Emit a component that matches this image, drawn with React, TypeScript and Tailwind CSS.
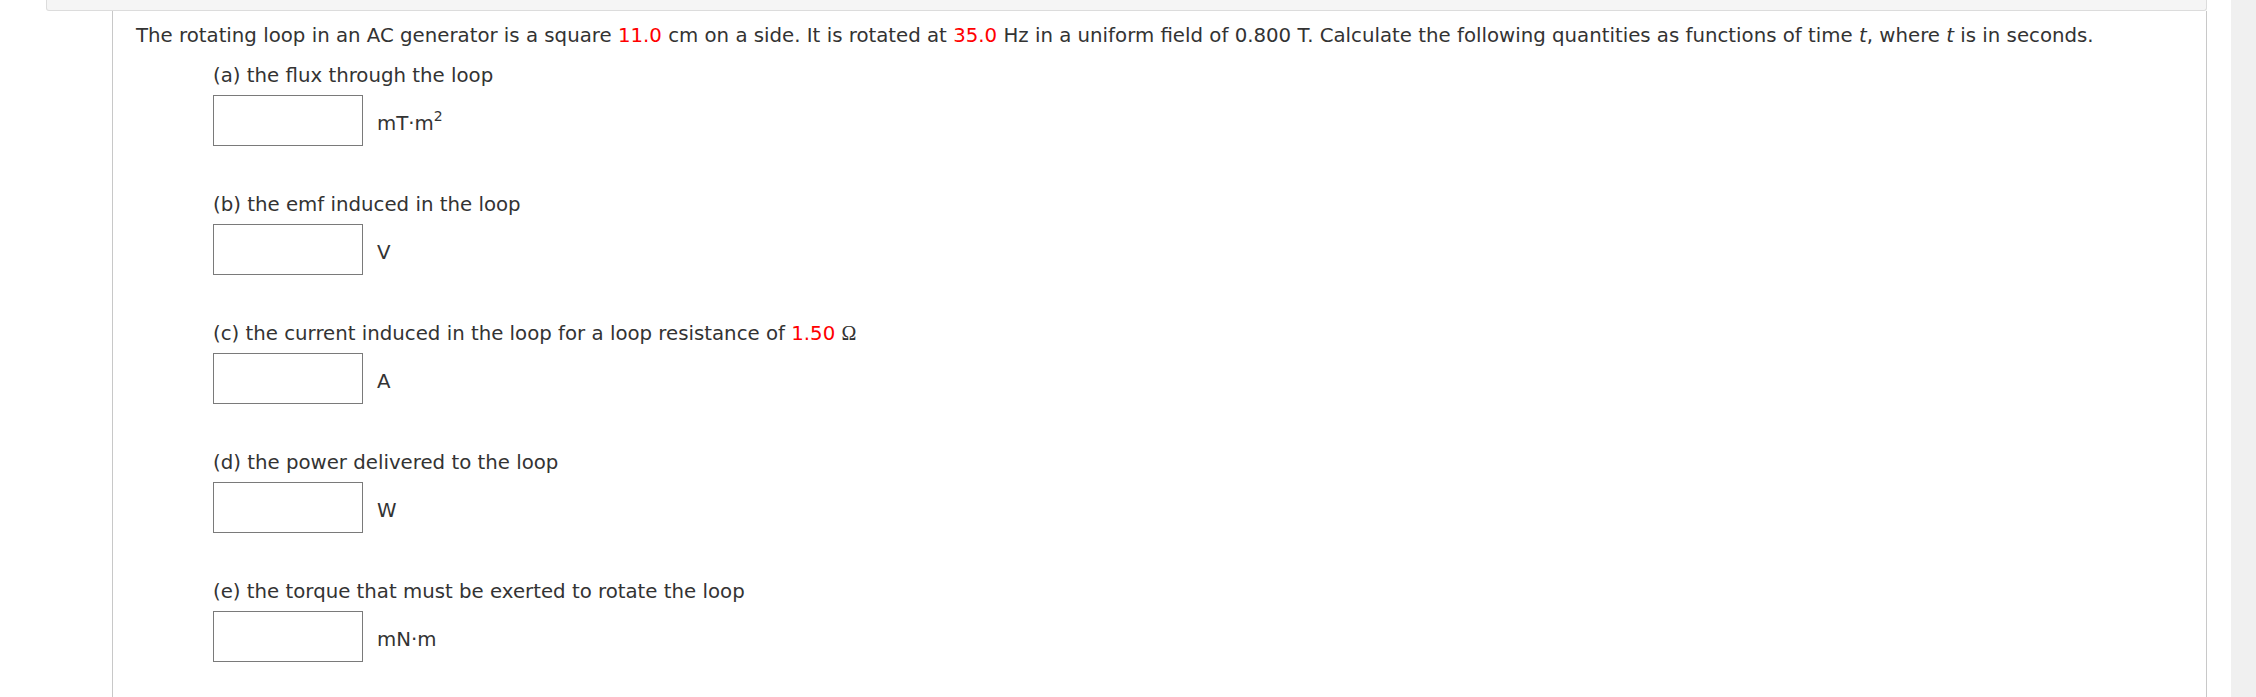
import type { ReactNode } from "react";

const font = { fontFamily: '"DejaVu Sans", Verdana, sans-serif' };

function Part({ label, unit }: { label: ReactNode; unit: ReactNode }) {
  return (
    <div className="ml-[77px]">
      <div className="leading-[29px]">{label}</div>
      <div className="mt-[5px] flex items-center">
        <input
          type="text"
          className="h-[51px] w-[150px] border border-[#7a7a7a] bg-white outline-none"
        />
        <span className="ml-[14px] mt-[6px] leading-[29px]">{unit}</span>
      </div>
    </div>
  );
}

const Red = ({ children }: { children: ReactNode }) => <span className="text-[#ff0000]">{children}</span>;

export default function App() {
  return (
    <div className="flex h-[697px] w-full bg-white text-[19.75px] text-[#333333]" style={font}>
      <div className="w-[46px] shrink-0" />
      <div className="flex w-[2161px] shrink-0 flex-col">
        <div className="h-[11px] shrink-0 rounded-b-[3px] border-x border-b border-[#dcdcdc] bg-[#f5f5f5]" />
        <div className="ml-[66px] flex-1 border-x border-[#c8c8c8] pl-[23px] pt-[9.5px]">
          <p className="leading-[29px]">
            The rotating loop in an AC generator is a square <Red>11.0</Red> cm on a side. It is rotated at{" "}
            <Red>35.0</Red> Hz in a uniform field of 0.800 T. Calculate the following quantities as functions of time{" "}
            <i>t</i>, where <i>t</i> is in seconds.
          </p>
          <div className="mt-[11px] flex flex-col gap-[44px]">
            <Part
              label="(a) the flux through the loop"
              unit={
                <>
                  mT·m<sup className="top-[-9px] text-[14px]">2</sup>
                </>
              }
            />
            <Part label="(b) the emf induced in the loop" unit="V" />
            <Part
              label={
                <>
                  (c) the current induced in the loop for a loop resistance of <Red>1.50</Red>{" "}
                  <span className="text-[20px]" style={{ fontFamily: '"Liberation Serif", serif' }}>
                    Ω
                  </span>
                </>
              }
              unit="A"
            />
            <Part label="(d) the power delivered to the loop" unit="W" />
            <Part label="(e) the torque that must be exerted to rotate the loop" unit="mN·m" />
          </div>
        </div>
      </div>
      <div className="flex-1" />
      <div className="w-[25px] shrink-0 bg-[#f0f0f0]" />
    </div>
  );
}
